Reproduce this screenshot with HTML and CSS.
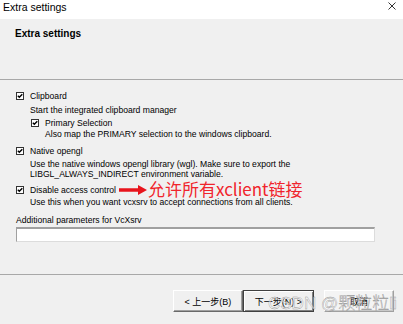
FILE: index.html
```html
<!DOCTYPE html>
<html>
<head>
<meta charset="utf-8">
<link rel="stylesheet" href="styles.css">
</head>
<body>
<div class="window">
  <div class="titlebar">
    <span class="title">Extra settings</span>
    <svg class="close" width="8" height="8" viewBox="0 0 8 8"><path d="M0.5 0.5 L7.5 7.5 M7.5 0.5 L0.5 7.5" stroke="#333" stroke-width="1" fill="none"/></svg>
  </div>
  <div class="header">Extra settings</div>
  <div class="content">
    <div class="check-row">
      <svg class="box" width="8" height="8" viewBox="0 0 8 8"><rect x="0.5" y="0.5" width="7" height="7" fill="#fff" stroke="#333"/><path d="M1.8 3.8 L3.3 5.3 L6.3 2.2" stroke="#000" stroke-width="1.4" fill="none"/></svg>
      <span>Clipboard</span>
    </div>
    <div class="desc d-clip">Start the integrated clipboard manager</div>
    <div class="sub">
      <div class="check-row">
        <svg class="box" width="8" height="8" viewBox="0 0 8 8"><rect x="0.5" y="0.5" width="7" height="7" fill="#fff" stroke="#333"/><path d="M1.8 3.8 L3.3 5.3 L6.3 2.2" stroke="#000" stroke-width="1.4" fill="none"/></svg>
        <span>Primary Selection</span>
      </div>
      <div class="desc d-prim">Also map the PRIMARY selection to the windows clipboard.</div>
    </div>
    <div class="check-row r-native">
      <svg class="box" width="8" height="8" viewBox="0 0 8 8"><rect x="0.5" y="0.5" width="7" height="7" fill="#fff" stroke="#333"/><path d="M1.8 3.8 L3.3 5.3 L6.3 2.2" stroke="#000" stroke-width="1.4" fill="none"/></svg>
      <span>Native opengl</span>
    </div>
    <div class="desc d-native">Use the native windows opengl library (wgl). Make sure to export the<br>LIBGL_ALWAYS_INDIRECT environment variable.</div>
    <div class="check-row r-disable">
      <svg class="box" width="8" height="8" viewBox="0 0 8 8"><rect x="0.5" y="0.5" width="7" height="7" fill="#fff" stroke="#333"/><path d="M1.8 3.8 L3.3 5.3 L6.3 2.2" stroke="#000" stroke-width="1.4" fill="none"/></svg>
      <span>Disable access control</span>
      <svg class="arrow" width="28" height="10" viewBox="0 0 28 10"><path d="M0 3.3 L19 3.3 L19 0 L28 5 L19 10 L19 6.7 L0 6.7 Z" fill="#e8141c"/></svg>
      <span class="note">允许所有xclient链接</span>
    </div>
    <div class="desc d-disable">Use this when you want vcxsrv to accept connections from all clients.</div>
    <div class="label">Additional parameters for VcXsrv</div>
    <div class="input"></div>
  </div>
  <div class="footer">
    <div class="btn">&lt; 上一步(B)</div>
    <div class="btn btn-default">下一步(N) &gt;</div>
    <div class="btn btn-cancel">取消</div>
    <div class="watermark">CSDN @颗粒粒li</div>
  </div>
</div>
</body>
</html>
```

FILE: styles.css
```css
html, body {
  margin: 0;
  padding: 0;
}
body {
  width: 403px;
  height: 324px;
  overflow: hidden;
  background: #f0f0f0;
  font-family: "Liberation Sans", Arial, "Noto Sans CJK SC", sans-serif;
  color: #000;
}
.window {
  position: relative;
  width: 403px;
  height: 324px;
}
.titlebar {
  height: 19px;
  background: #fff;
  display: flex;
  justify-content: space-between;
  align-items: flex-start;
  padding: 0 7px 0 3px;
  box-sizing: border-box;
  font-size: 10.5px;
  line-height: 14px;
}
.close {
  margin-top: 2px;
}
.header {
  height: 61px;
  box-sizing: border-box;
  border-bottom: 1px solid #a8a8a8;
  padding: 9px 0 0 15px;
  font-size: 10px;
  font-weight: bold;
  line-height: 12px;
}
.content {
  height: 195px;
  box-sizing: border-box;
  padding: 11px 0 0 16px;
  border-bottom: 1px solid #a8a8a8;
  font-size: 8.6px;
  line-height: 10px;
}
.check-row {
  display: flex;
  align-items: center;
  height: 10px;
  position: relative;
}
.box {
  flex: none;
  margin-right: 6px;
}
.desc {
  padding-left: 14px;
}
.d-clip { margin-top: 4px; }
.sub {
  padding-left: 15px;
  margin-top: 3px;
}
.d-prim { margin-top: 1px; }
.r-native { margin-top: 7px; }
.d-native { margin-top: 3px; }
.r-disable { margin-top: 6px; }
.d-disable { margin-top: 2px; }
.label { margin-top: 8px; }
.arrow {
  position: absolute;
  left: 103px;
  top: 0px;
}
.note {
  position: absolute;
  left: 132px;
  top: -3px;
  font-family: "Noto Sans CJK SC", sans-serif;
  font-size: 17px;
  line-height: 14px;
  color: #f0242c;
  white-space: nowrap;
}
.input {
  margin-top: 2px;
  width: 359px;
  height: 15px;
  box-sizing: border-box;
  background: #fff;
  border: 1px solid #dcdcdc;
  border-top: 2px solid #a0a0a0;
  border-left: 1px solid #a0a0a0;
}
.footer {
  display: flex;
  justify-content: flex-end;
  align-items: flex-start;
  padding: 15px 9px 0 0;
}
.btn {
  width: 70px;
  height: 22px;
  box-sizing: border-box;
  display: flex;
  align-items: center;
  justify-content: center;
  font-family: "Liberation Sans", "Noto Sans CJK SC", sans-serif;
  font-size: 9px;
  background: #f0f0f0;
  border: 1px solid;
  border-color: #fff #696969 #696969 #fff;
  box-shadow: inset -1px -1px 0 #a0a0a0;
}
.btn-default {
  width: 71px;
  border: 1px solid #404040;
  box-shadow: inset 1px 1px 0 #fff, inset -1px -1px 0 #808080;
}
.btn-cancel {
  margin-left: 10px;
  background: #f4f4f4;
  border-color: #fff #a0a0a0 #a0a0a0 #fff;
  box-shadow: inset -1px -1px 0 #c8c8c8;
}
.watermark {
  position: absolute;
  left: 268px;
  top: 294px;
  font-family: "Liberation Sans", "Noto Sans CJK SC", sans-serif;
  font-size: 17px;
  font-weight: 300;
  line-height: 20px;
  color: rgba(255, 255, 255, 0.6);
  -webkit-text-stroke: 0.4px rgba(110, 110, 110, 0.75);
  white-space: nowrap;
}
```
